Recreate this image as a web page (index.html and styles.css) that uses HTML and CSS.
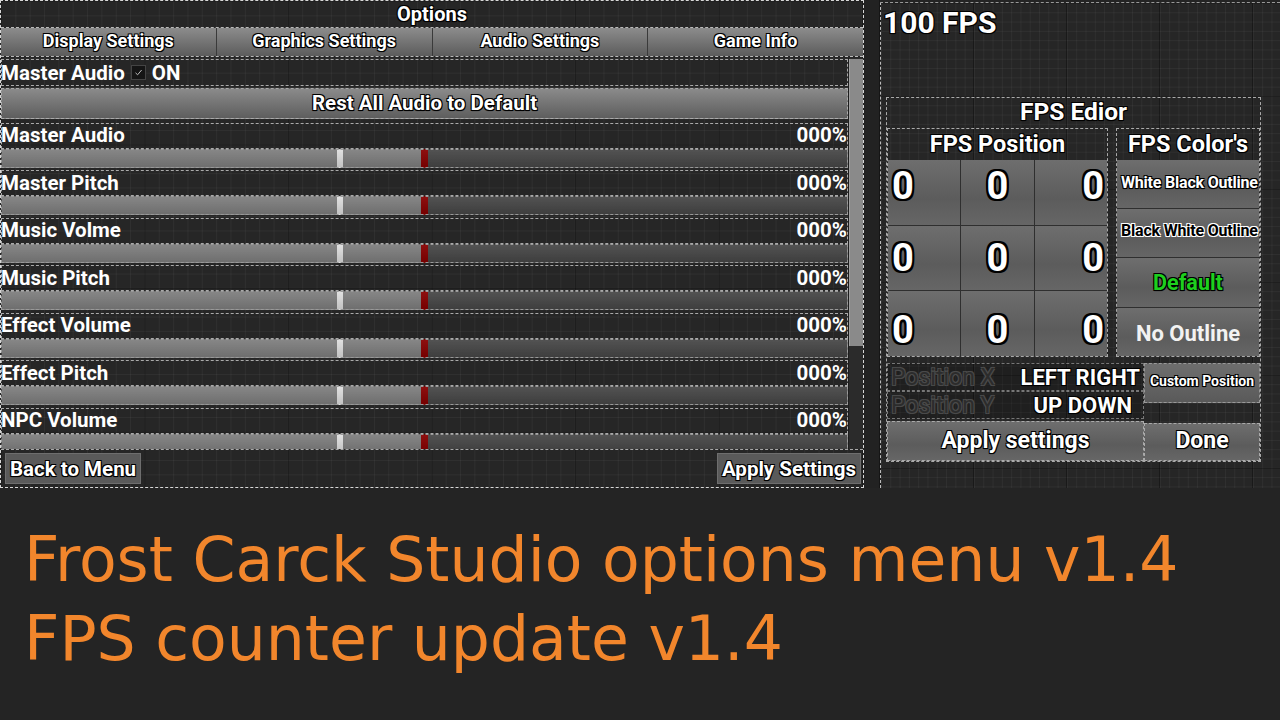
FILE: index.html
```html
<!DOCTYPE html>
<html lang="en">
<head>
<meta charset="UTF-8">
<title>Frost Carck Studio options menu v1.4</title>
<link rel="stylesheet" href="styles.css">
</head>
<body>

<div class="screen">

  <!-- Options menu (audio tab) -->
  <section class="options">
    <div class="options-title">Options</div>
    <div class="tabs">
      <div class="tab">Display Settings</div>
      <div class="tab">Graphics Settings</div>
      <div class="tab">Audio Settings</div>
      <div class="tab">Game Info</div>
    </div>

    <div class="audio">
      <div class="audio-list">
        <div class="toggle-row">
          <span>Master Audio</span>
          <span class="checkbox">
            <svg width="13" height="13" viewBox="0 0 13 13"><path d="M3.5 6.8 L5.6 8.8 L9.6 4" fill="none" stroke="#bbb" stroke-width="1"/></svg>
          </span>
          <span>ON</span>
        </div>
        <div class="reset">Rest All Audio to Default</div>

        <div class="setting">
          <div class="setting-head"><span>Master Audio</span><span>000%</span></div>
          <div class="slider"></div>
        </div>
        <div class="setting">
          <div class="setting-head"><span>Master Pitch</span><span>000%</span></div>
          <div class="slider"></div>
        </div>
        <div class="setting">
          <div class="setting-head"><span>Music Volme</span><span>000%</span></div>
          <div class="slider"></div>
        </div>
        <div class="setting">
          <div class="setting-head"><span>Music Pitch</span><span>000%</span></div>
          <div class="slider"></div>
        </div>
        <div class="setting">
          <div class="setting-head"><span>Effect Volume</span><span>000%</span></div>
          <div class="slider"></div>
        </div>
        <div class="setting">
          <div class="setting-head"><span>Effect Pitch</span><span>000%</span></div>
          <div class="slider"></div>
        </div>
        <div class="setting">
          <div class="setting-head"><span>NPC Volume</span><span>000%</span></div>
          <div class="slider"></div>
        </div>
      </div>
      <div class="scrollbar"><div class="scroll-thumb"></div></div>
    </div>

    <div class="options-foot">
      <div class="foot-button">Back to Menu</div>
      <div class="foot-button">Apply Settings</div>
    </div>
  </section>

  <div class="gutter"></div>

  <!-- FPS counter + editor -->
  <section class="hud">
    <div class="fps-counter">100 FPS</div>

    <div class="editor">
      <div class="editor-title">FPS Edior</div>

      <div class="editor-cols">
        <div class="pos-box">
          <div class="box-title">FPS Position</div>
          <div class="pos-grid">
            <div class="pos-cell top left">0</div>
            <div class="pos-cell top center">0</div>
            <div class="pos-cell top right">0</div>
            <div class="pos-cell middle left">0</div>
            <div class="pos-cell middle center">0</div>
            <div class="pos-cell middle right">0</div>
            <div class="pos-cell bottom left">0</div>
            <div class="pos-cell bottom center">0</div>
            <div class="pos-cell bottom right">0</div>
          </div>
        </div>

        <div class="color-box">
          <div class="box-title">FPS Color's</div>
          <div class="color-list">
            <div class="color-button small">White Black Outline</div>
            <div class="color-button small inverse">Black White Outline</div>
            <div class="color-button green">Default</div>
            <div class="color-button plain">No Outline</div>
          </div>
        </div>
      </div>

      <div class="editor-foot">
        <div class="axis-col">
          <div class="axis-row"><span class="axis-name">Position X</span><span>LEFT RIGHT</span></div>
          <div class="axis-row"><span class="axis-name">Position Y</span><span class="axis-value">UP DOWN</span></div>
          <div class="apply-button">Apply settings</div>
        </div>
        <div class="side-col">
          <div class="custom-button">Custom Position</div>
          <div class="done-button">Done</div>
        </div>
      </div>
    </div>
  </section>
</div>

<!-- Video caption -->
<div class="caption">
  Frost Carck Studio options menu v1.4<br>
  FPS counter update v1.4
</div>

</body>
</html>
```

FILE: styles.css
```css
body {
  margin: 0;
  background-color: #242424;
  font-family: Roboto, "Liberation Sans", sans-serif;
  color: #fff;
  overflow: hidden;
}

/* shared outlined text, unreal style */
.options-title,
.tab,
.reset,
.foot-button,
.fps-counter,
.editor-title,
.box-title,
.apply-button,
.done-button,
.custom-button,
.axis-row span,
.color-button {
  font-weight: bold;
  text-shadow: -1px -1px 0 #000, 1px -1px 0 #000, -1px 1px 0 #000, 1px 1px 0 #000, 0 1px 1px #000;
}

.screen {
  display: flex;
  height: 488px;
}

/* Options panel */
.options {
  width: 864px;
  height: 488px;
  box-sizing: border-box;
  border: 1px dashed #d8d8d8;
  display: flex;
  flex-direction: column;
  background:
    linear-gradient(90deg, rgba(0, 0, 0, 0.35) 1px, transparent 1px) 0 0 / 143.5px 143.5px,
    linear-gradient(rgba(0, 0, 0, 0.35) 1px, transparent 1px) 0 0 / 143.5px 143.5px,
    linear-gradient(90deg, rgba(255, 255, 255, 0.045) 1px, transparent 1px) 0 0 / 14.35px 14.35px,
    linear-gradient(rgba(255, 255, 255, 0.045) 1px, transparent 1px) 0 0 / 14.35px 14.35px,
    #262626;
}

.options-title {
  height: 26px;
  line-height: 27px;
  text-align: center;
  font-size: 20px;
}

.tabs {
  display: flex;
  height: 28px;
  border-top: 1px dashed #bbb;
  border-bottom: 1px dashed #bbb;
}

.tab {
  flex: 1;
  line-height: 26px;
  text-align: center;
  font-size: 18px;
  background: linear-gradient(#8c8c8c, #5c5c5c);
  border-right: 1px solid #3a3a3a;
}

.tab:last-child {
  border-right: none;
}

/* Audio list */
.audio {
  display: flex;
  height: 391px;
  margin-top: 1px;
}

.audio-list {
  flex: 1;
  overflow: hidden;
  display: flex;
  flex-direction: column;
  font-size: 20.5px;
  font-weight: bold;
}

.toggle-row {
  height: 27px;
  margin-top: 1px;
  box-sizing: border-box;
  border: 1px dashed #aaa;
  display: flex;
  align-items: center;
  gap: 6px;
  flex-shrink: 0;
}

.toggle-row span:first-child {
  margin-left: -1px;
}

.checkbox {
  width: 13px;
  height: 13px;
  background: #151515;
  border: 1px solid #444;
  display: flex;
}

.reset {
  height: 31px;
  margin-top: 2px;
  box-sizing: border-box;
  border: 1px dashed #aaa;
  background: linear-gradient(#8a8a8a, #5e5e5e);
  text-align: center;
  line-height: 29px;
  font-size: 20.5px;
  flex-shrink: 0;
}

.setting {
  margin-top: 3.5px;
  flex-shrink: 0;
}

.setting + .setting {
  margin-top: 2.5px;
}

.setting-head {
  height: 26px;
  box-sizing: border-box;
  border: 1px dashed #aaa;
  display: flex;
  justify-content: space-between;
  align-items: center;
  line-height: 25px;
}

.setting-head span:first-child {
  margin-left: -1px;
}

.slider {
  height: 19px;
  box-sizing: border-box;
  border: 1px dashed #999;
  background:
    linear-gradient(rgba(255, 255, 255, 0.06), rgba(0, 0, 0, 0.12)),
    linear-gradient(90deg, #7e7e7e 0 335px, #dedede 335px 341px, #7e7e7e 341px 419px, #860000 419px 426px, #474747 426px);
}

.scrollbar {
  width: 15px;
  background: #2b2b2b;
  border-left: 1px solid #1d1d1d;
  box-sizing: border-box;
}

.scroll-thumb {
  height: 287px;
  margin-top: 1px;
  background: #8a8a8a;
  border-left: 1px solid #a0a0a0;
}

/* Footer buttons */
.options-foot {
  flex: 1;
  display: flex;
  justify-content: space-between;
  align-items: center;
  padding: 0 2px 0 4px;
  border-top: 1px dashed #aaa;
}

.foot-button {
  height: 31px;
  line-height: 30px;
  padding: 0 4px;
  box-sizing: border-box;
  font-size: 20.5px;
  background: #5a5a5a;
  border: 1px solid #6e6e6e;
}

/* Gutter between the two captures */
.gutter {
  width: 16px;
  background: #222;
  border-right: 1px solid #151515;
  box-sizing: border-box;
}

/* HUD side */
.hud {
  flex: 1;
  margin-top: 2px;
  border-top: 1px dashed #999;
  border-left: 1px dashed #bbb;
  display: flex;
  flex-direction: column;
  padding-left: 5px;
  background:
    linear-gradient(90deg, rgba(0, 0, 0, 0.35) 1px, transparent 1px) -1px 0 / 93px 93px,
    linear-gradient(rgba(0, 0, 0, 0.35) 1px, transparent 1px) 0 0 / 93px 93px,
    linear-gradient(90deg, rgba(255, 255, 255, 0.045) 1px, transparent 1px) 0 0 / 9.3px 9.3px,
    linear-gradient(rgba(255, 255, 255, 0.045) 1px, transparent 1px) 0 0 / 9.3px 9.3px,
    #262626;
}

.fps-counter {
  height: 94px;
  line-height: 40px;
  font-size: 30px;
  margin-left: -3px;
}

.editor {
  width: 375px;
  height: 365px;
  box-sizing: border-box;
  border: 1px dashed #aaa;
  display: flex;
  flex-direction: column;
}

.editor-title {
  height: 30px;
  line-height: 28px;
  text-align: center;
  font-size: 24.5px;
}

.editor-cols {
  display: flex;
  gap: 8px;
  height: 230px;
}

.pos-box,
.color-box {
  box-sizing: border-box;
  border: 1px dashed #aaa;
  display: flex;
  flex-direction: column;
}

.pos-box {
  width: 221px;
}

.color-box {
  flex: 1;
}

.box-title {
  height: 31px;
  line-height: 30px;
  text-align: center;
  font-size: 23.5px;
}

.pos-grid {
  flex: 1;
  display: grid;
  grid-template-columns: 1fr 1fr 1fr;
  grid-template-rows: 1fr 1fr 1fr;
  gap: 1px;
  background: #2f2f2f;
}

.pos-cell {
  display: flex;
  padding: 0 4px;
  font-size: 38px;
  font-weight: bold;
  background: linear-gradient(#6e6e6e, #5c5c5c 60%, #666);
  text-shadow: -2px -2px 0 #000, 2px -2px 0 #000, -2px 2px 0 #000, 2px 2px 0 #000, 0 2px 0 #000, 2px 0 0 #000, -2px 0 0 #000, 0 -2px 0 #000;
}

.pos-cell.left { justify-content: flex-start; }
.pos-cell.center { justify-content: center; }
.pos-cell.right { justify-content: flex-end; padding-right: 3px; }
.pos-cell.top { align-items: flex-start; padding-top: 4px; }
.pos-cell.middle { align-items: center; }
.pos-cell.bottom { align-items: flex-end; padding-bottom: 4px; }

.color-list {
  flex: 1;
  display: flex;
  flex-direction: column;
  gap: 1px;
  background: #2f2f2f;
}

.color-button {
  flex: 1;
  text-align: center;
  background: linear-gradient(#6e6e6e, #5c5c5c 60%, #666);
  font-size: 21.5px;
  line-height: 48px;
  white-space: nowrap;
  overflow: hidden;
}

.color-button.small {
  font-size: 16px;
  letter-spacing: -0.2px;
  line-height: 45px;
  padding-left: 4px;
  text-align: left;
}

.color-button.inverse {
  color: #000;
  text-shadow: -1px -1px 0 #fff, 1px -1px 0 #fff, -1px 1px 0 #fff, 1px 1px 0 #fff;
  line-height: 43px;
}

.color-button.green {
  color: #1ecf1e;
  line-height: 49px;
}

.color-button.plain {
  font-size: 22px;
  color: #f2f2f2;
  text-shadow: none;
  line-height: 51px;
}

.editor-foot {
  flex: 1;
  display: flex;
  margin-top: 6px;
}

.axis-col {
  width: 257px;
  display: flex;
  flex-direction: column;
}

.axis-row {
  height: 28px;
  box-sizing: border-box;
  border: 1px dashed #777;
  background: rgba(0, 0, 0, 0.18);
  display: flex;
  justify-content: space-between;
  align-items: center;
  padding: 0 3px 0 3px;
  font-size: 22px;
}

.axis-row .axis-name {
  font-weight: normal;
  color: #2c2c2c;
  text-shadow: -1px -1px 0 #4a4a4a, 1px -1px 0 #4a4a4a, -1px 1px 0 #4a4a4a, 1px 1px 0 #4a4a4a;
  font-size: 23px;
}

.axis-row .axis-value {
  margin-right: 8px;
}

.apply-button {
  flex: 1;
  margin-top: 2px;
  box-sizing: border-box;
  border: 1px dashed #aaa;
  background: linear-gradient(#6e6e6e, #5c5c5c 60%, #666);
  text-align: center;
  line-height: 38px;
  font-size: 23px;
}

.side-col {
  flex: 1;
  display: flex;
  flex-direction: column;
  justify-content: space-between;
}

.custom-button {
  height: 40px;
  box-sizing: border-box;
  border: 1px dashed #999;
  background: linear-gradient(#6e6e6e, #5a5a5a);
  text-align: center;
  font-size: 14px;
  line-height: 34px;
  white-space: nowrap;
}

.done-button {
  height: 38px;
  box-sizing: border-box;
  border: 1px dashed #aaa;
  background: linear-gradient(#6e6e6e, #5c5c5c 60%, #666);
  text-align: center;
  font-size: 23px;
  line-height: 33px;
}

/* Caption under the capture */
.caption {
  padding: 33px 0 0 24px;
  font-family: "DejaVu Sans", sans-serif;
  font-size: 61.6px;
  line-height: 79px;
  color: #f2862c;
  white-space: nowrap;
}
```
